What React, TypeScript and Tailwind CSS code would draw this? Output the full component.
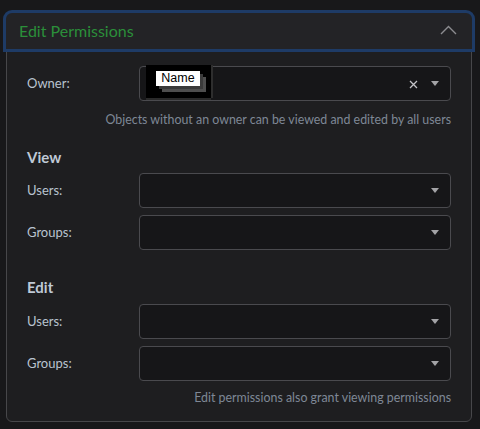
import React from 'react';

const FONT = { fontFamily: 'Lato, "Noto Sans", sans-serif' };

const Caret = () => (
  <span className="w-0 h-0 border-l-[4.5px] border-r-[4.5px] border-t-[5px] border-l-transparent border-r-transparent border-t-[#a3a3a6]" />
);

const Select: React.FC<{ clearable?: boolean; children?: React.ReactNode }> = ({ clearable, children }) => (
  <div className="relative flex-1 h-[35px] rounded-[4px] border border-[#4a4a4e] bg-[#161618] flex items-center justify-end pr-[11px] gap-[13px]">
    {children}
    {clearable && (
      <svg width="9" height="9" viewBox="0 0 9 9" className="mt-[1px]">
        <path d="M1 1 L8 8 M8 1 L1 8" stroke="#c4c4c8" strokeWidth="1.3" />
      </svg>
    )}
    <Caret />
  </div>
);

const Row: React.FC<{ label: string; clearable?: boolean; className?: string; children?: React.ReactNode }> = ({
  label,
  clearable,
  className,
  children,
}) => (
  <div className={`flex items-center ${className ?? ''}`}>
    <div className="w-[112px] text-[13px] text-[#b9c3cf]">{label}</div>
    <Select clearable={clearable}>{children}</Select>
  </div>
);

const App: React.FC = () => {
  return (
    <div className="w-[480px] h-[429px] bg-[#18181a] pt-[13px] pl-[6px] pr-[8px]" style={FONT}>
      <div className="rounded-[6px] border border-[#47474a] bg-[#1e1e20]">
        {/* Header */}
        <div className="h-[36px] -m-px rounded-t-[6px] bg-[#232326] ring-[3px] ring-[#1e3b66] flex items-center justify-between pl-[13px] pr-[15px]">
          <span className="text-[16px] text-[#2b8f3a]">Edit Permissions</span>
          <svg width="17" height="10" viewBox="0 0 17 10" className="mt-[-2px]">
            <polyline points="1,9 8.5,1.5 16,9" fill="none" stroke="#8c8c90" strokeWidth="1.4" />
          </svg>
        </div>

        {/* Body */}
        <div className="px-5 pt-[18px] pb-[15px]">
          <Row label="Owner:" clearable>
            {/* drag ghost */}
            <div className="absolute left-[6px] top-[-2px] w-[65px] h-[33px] bg-black shadow-[2px_0_0_#2e2e2e,0_2px_0_#2a2a2a]">
              <div
                className="absolute left-[10px] top-[6px] w-[44px] h-[15px] bg-white text-black text-[12.5px] leading-[15px] text-center shadow-[3px_3px_0_#3a3a3a,6px_6px_0_#4e4e4e]"
                style={{ fontFamily: '"Liberation Sans", Arial, sans-serif' }}
              >
                Name
              </div>
            </div>
          </Row>
          <div className="mt-[11px] h-4 leading-4 text-right text-[12.4px] text-[#7f8896]">
            Objects without an owner can be viewed and edited by all users
          </div>

          <div className="mt-[19px] h-5 leading-5 text-[15px] font-bold text-[#bfc9d6]">View</div>
          <Row label="Users:" className="mt-[6px]" />
          <Row label="Groups:" className="mt-[7px]" />

          <div className="mt-[27px] h-5 leading-5 text-[15px] font-bold text-[#bfc9d6]">Edit</div>
          <Row label="Users:" className="mt-[7px]" />
          <Row label="Groups:" className="mt-[7px]" />
          <div className="mt-[9px] h-4 leading-4 text-right text-[12.4px] text-[#7f8896]">
            Edit permissions also grant viewing permissions
          </div>
        </div>
      </div>
    </div>
  );
};

export default App;
